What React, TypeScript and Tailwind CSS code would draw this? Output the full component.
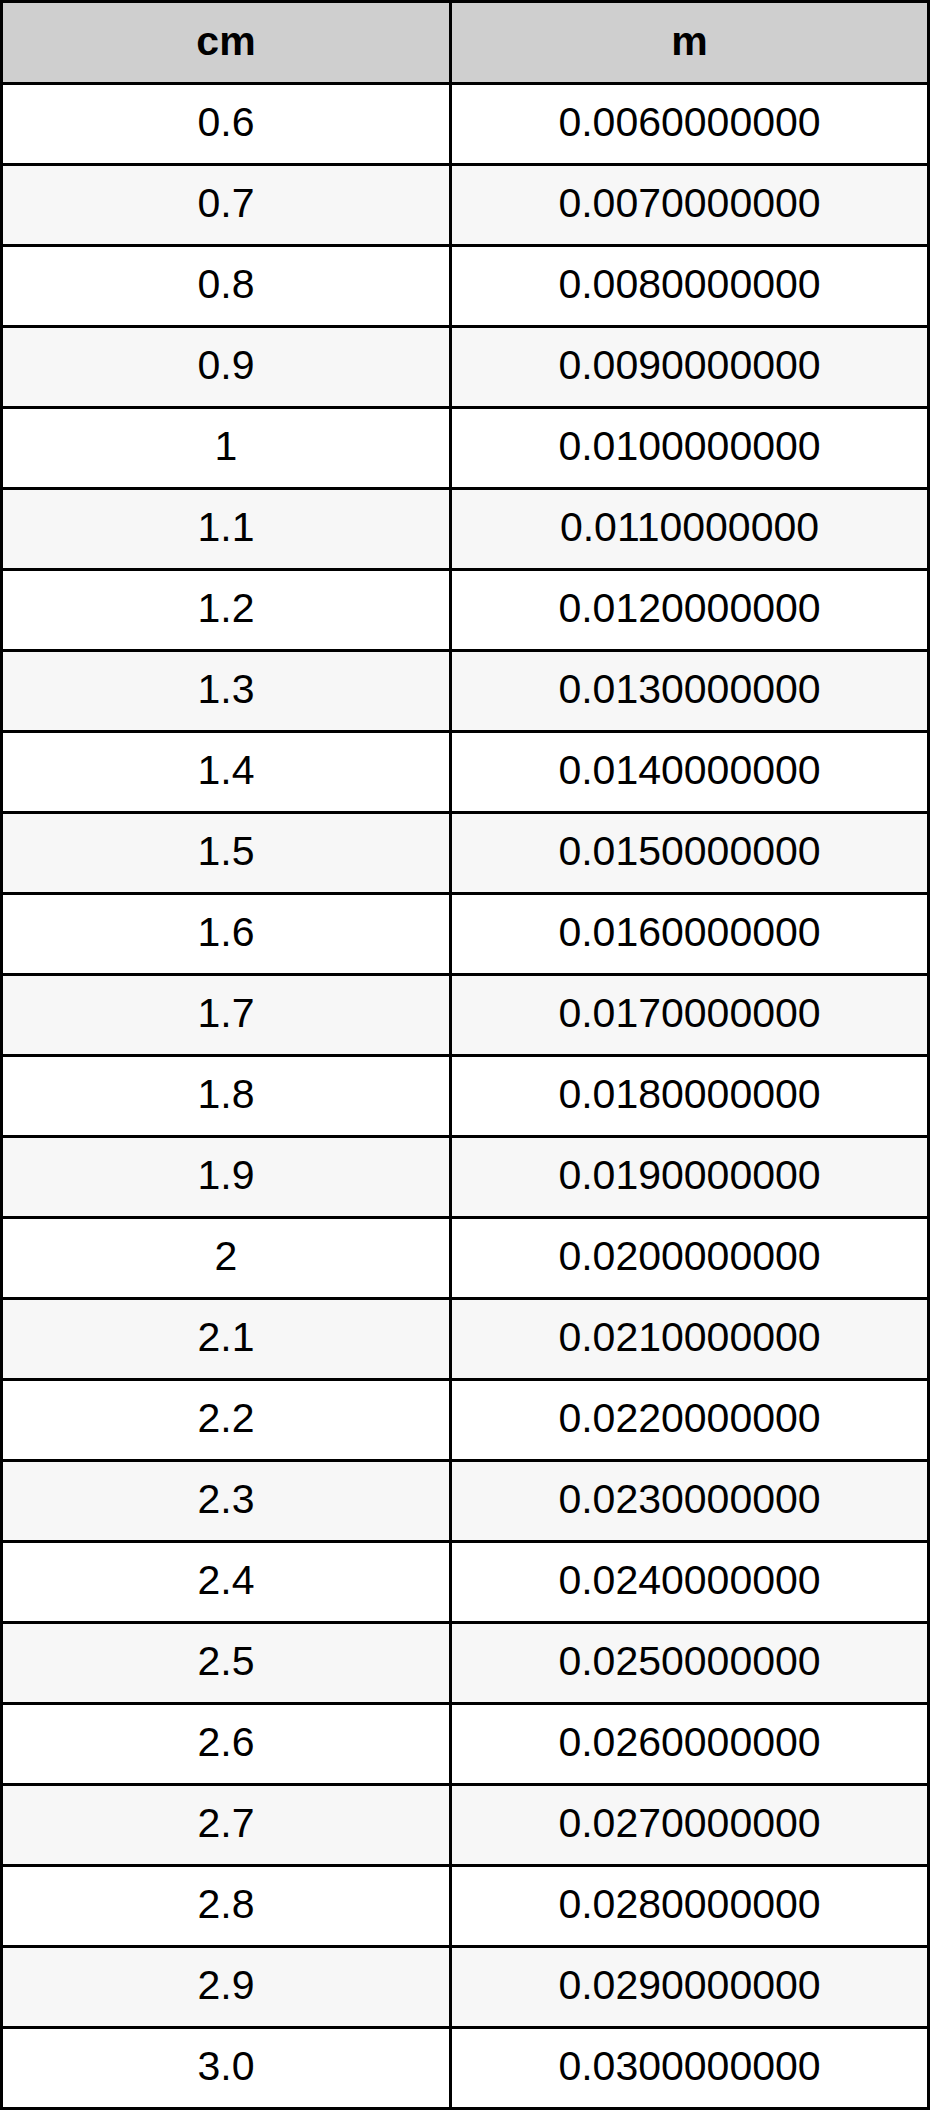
const rows: [string, string][] = [
  ['0.6', '0.0060000000'],
  ['0.7', '0.0070000000'],
  ['0.8', '0.0080000000'],
  ['0.9', '0.0090000000'],
  ['1', '0.0100000000'],
  ['1.1', '0.0110000000'],
  ['1.2', '0.0120000000'],
  ['1.3', '0.0130000000'],
  ['1.4', '0.0140000000'],
  ['1.5', '0.0150000000'],
  ['1.6', '0.0160000000'],
  ['1.7', '0.0170000000'],
  ['1.8', '0.0180000000'],
  ['1.9', '0.0190000000'],
  ['2', '0.0200000000'],
  ['2.1', '0.0210000000'],
  ['2.2', '0.0220000000'],
  ['2.3', '0.0230000000'],
  ['2.4', '0.0240000000'],
  ['2.5', '0.0250000000'],
  ['2.6', '0.0260000000'],
  ['2.7', '0.0270000000'],
  ['2.8', '0.0280000000'],
  ['2.9', '0.0290000000'],
  ['3.0', '0.0300000000'],
];

const App = () => {
  return (
    <div className="w-[930px] bg-white font-['Liberation_Sans',Arial,sans-serif] text-black">
      <div className="border-[3px] border-black">
        {/* Header */}
        <div className="flex h-[79px] bg-[#cfcfcf] text-[41px] font-bold">
          <div className="flex w-[449px] items-center justify-center border-r-[3px] border-black pb-[2px]">
            cm
          </div>
          <div className="flex flex-1 items-center justify-center pb-[2px]">m</div>
        </div>

        {rows.map(([cm, m], i) => (
          <div
            key={cm}
            className={`flex h-[81px] border-t-[3px] border-black text-[41px] ${
              i % 2 === 1 ? 'bg-[#f7f7f7]' : 'bg-white'
            }`}
          >
            <div className="flex w-[449px] items-center justify-center border-r-[3px] border-black pb-[3px]">
              {cm}
            </div>
            <div className="flex flex-1 items-center justify-center pb-[3px]">{m}</div>
          </div>
        ))}
      </div>
    </div>
  );
};

export default App;
